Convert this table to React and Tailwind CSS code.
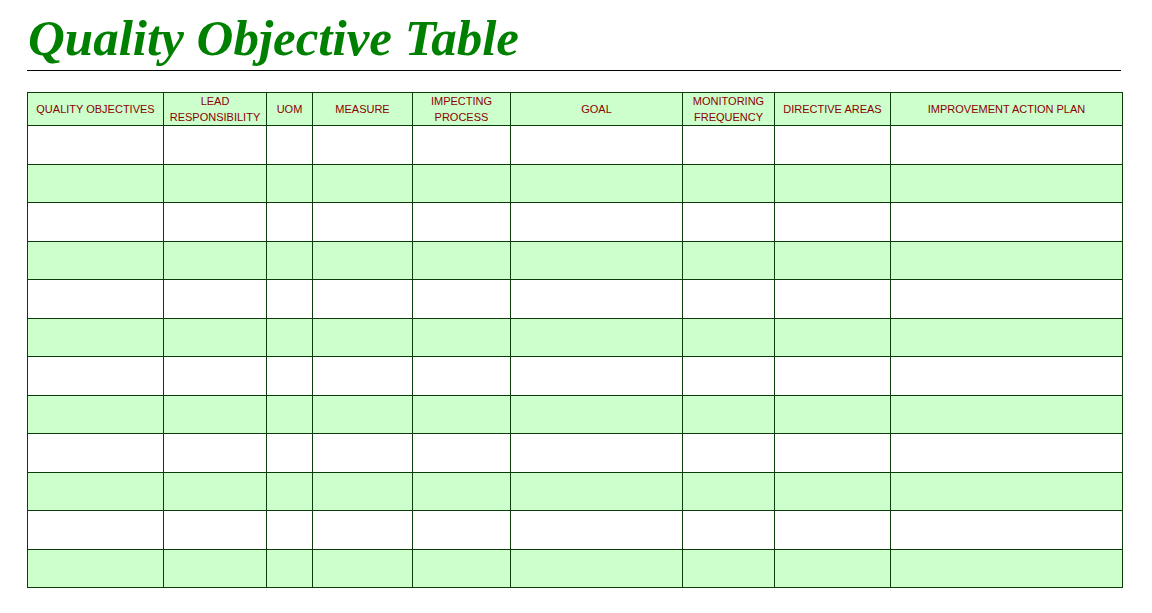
const cols = [
  { label: 'QUALITY OBJECTIVES', w: 'w-[136px]' },
  { label: 'LEAD RESPONSIBILITY', w: 'w-[103px]' },
  { label: 'UOM', w: 'w-[46px]' },
  { label: 'MEASURE', w: 'w-[100px]' },
  { label: 'IMPECTING PROCESS', w: 'w-[98px]' },
  { label: 'GOAL', w: 'w-[172px]' },
  { label: 'MONITORING FREQUENCY', w: 'w-[92px]' },
  { label: 'DIRECTIVE AREAS', w: 'w-[116px]' },
  { label: 'IMPROVEMENT ACTION PLAN', w: 'w-[232px]' },
];

const rows = Array.from({ length: 12 }, (_, i) => i);

export default function App() {
  return (
    <div className="w-[1152px] h-[613px] bg-white pl-[27px] pr-[30px]">
      <h1
        className="pt-[9px] pl-[1px] h-[60px] text-[51px] leading-[58px] italic font-bold text-[#008000]"
        style={{ fontFamily: '"Liberation Serif", "DejaVu Serif", serif' }}
      >
        Quality Objective Table
      </h1>
      <div className="mt-[10px] h-px w-[1094px] bg-black" />
      <table
        className="mt-[21px] border-collapse table-fixed w-[1095px] text-[11px] text-[#8b0000]"
        style={{ fontFamily: '"Liberation Sans", Arial, sans-serif' }}
      >
        <thead>
          <tr className="h-[33px] bg-[#ccffcc]">
            {cols.map((c) => (
              <th
                key={c.label}
                className={`${c.w} border border-[#0b3d0b] px-1 font-normal leading-[16px] text-center`}
              >
                {c.label}
              </th>
            ))}
          </tr>
        </thead>
        <tbody>
          {rows.map((r) => (
            <tr key={r} className={r % 2 === 1 ? 'h-[38.5px] bg-[#ccffcc]' : 'h-[38.5px] bg-white'}>
              {cols.map((c) => (
                <td key={c.label} className="border border-[#0b3d0b]" />
              ))}
            </tr>
          ))}
        </tbody>
      </table>
    </div>
  );
}
